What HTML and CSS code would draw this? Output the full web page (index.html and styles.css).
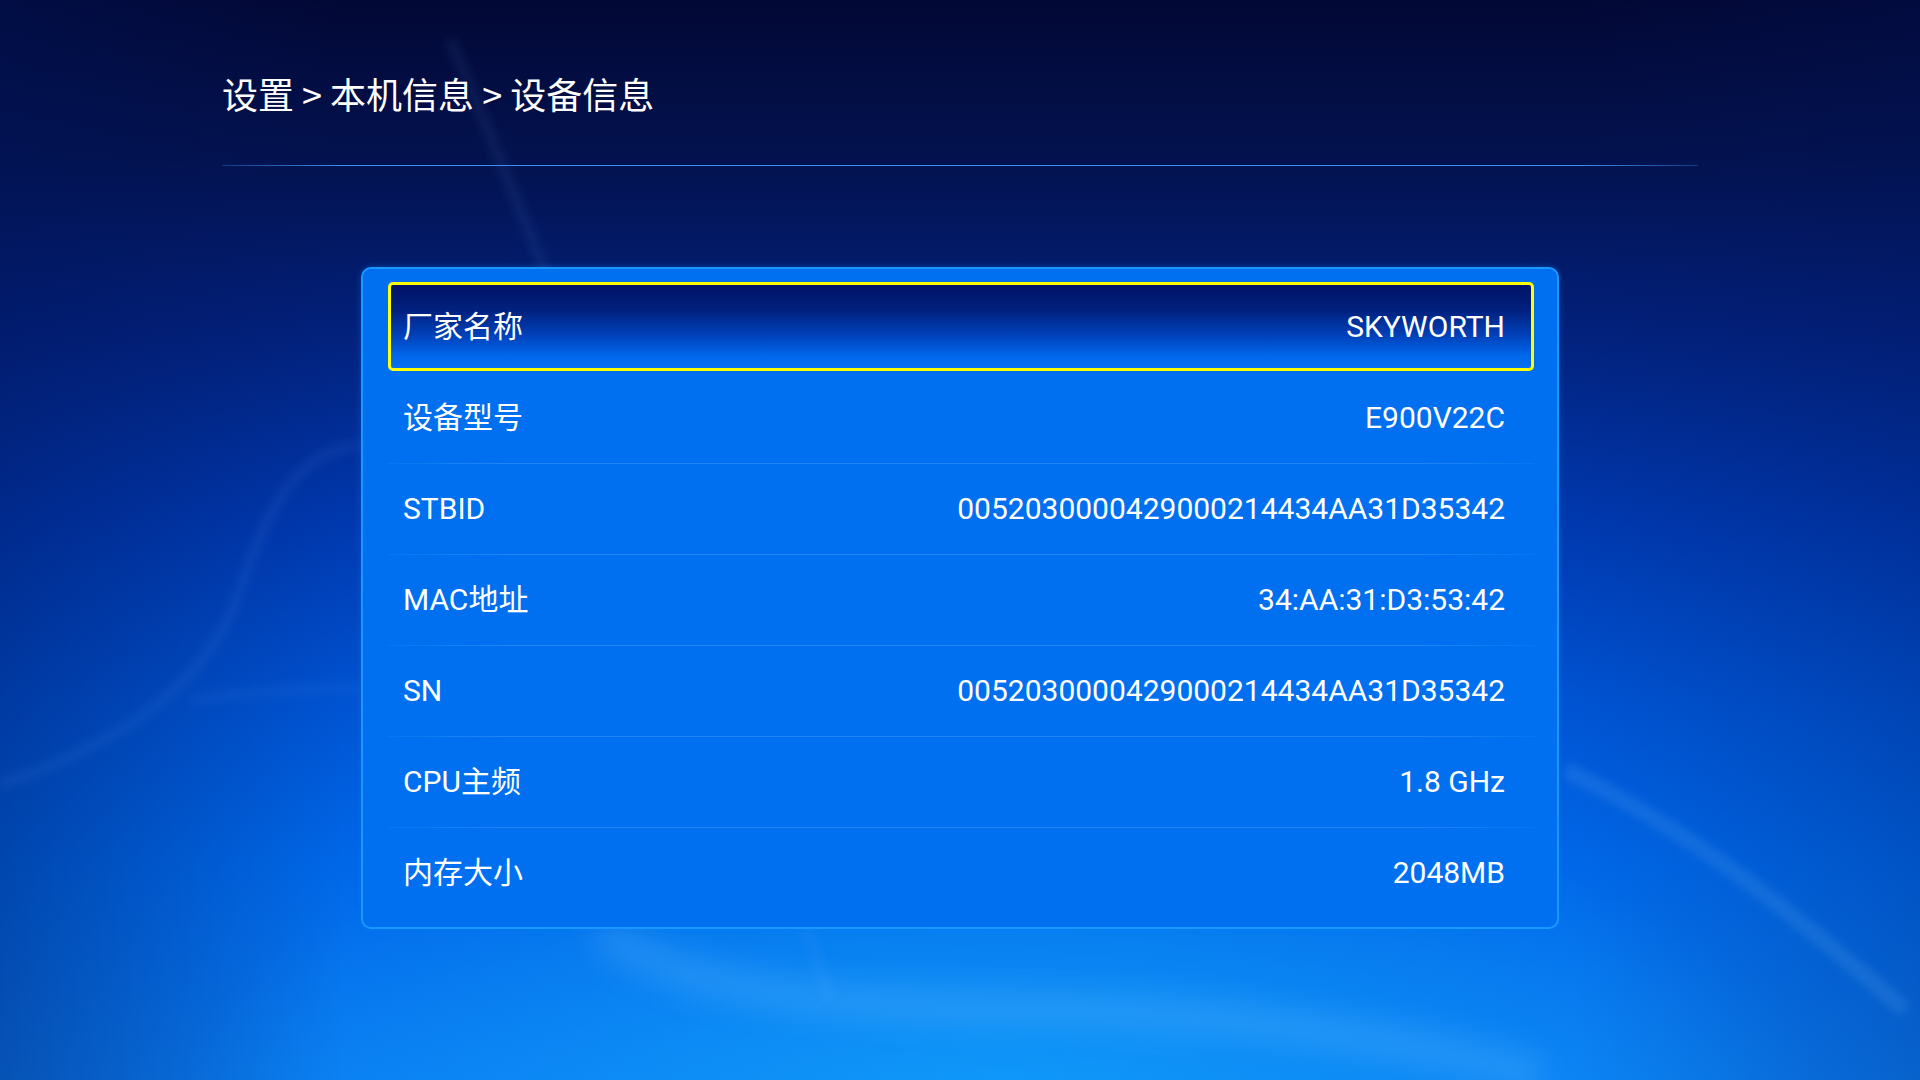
FILE: index.html
```html
<!DOCTYPE html>
<html lang="zh-CN">
<head>
<meta charset="utf-8">
<title>设备信息</title>
<link rel="stylesheet" href="styles.css">
</head>
<body>
<div class="screen">
  <svg class="bg-swirl" width="1920" height="1080" viewBox="0 0 1920 1080">
    <defs>
      <filter id="soft" x="-10%" y="-10%" width="120%" height="120%"><feGaussianBlur stdDeviation="4"/></filter>
      <filter id="softer" x="-20%" y="-20%" width="140%" height="140%"><feGaussianBlur stdDeviation="14"/></filter>
    </defs>
    <g fill="none" filter="url(#soft)">
      <path d="M450 40 C 520 200, 600 420, 690 620 S 790 880, 830 1000" stroke="rgba(110,170,255,0.08)" stroke-width="12"/>
      <path d="M690 400 C 830 360, 1030 470, 1120 700" stroke="rgba(110,170,255,0.09)" stroke-width="10"/>
      <path d="M830 520 C 770 560, 750 650, 760 760" stroke="rgba(110,170,255,0.07)" stroke-width="8"/>
      <path d="M362 445 C 300 450, 270 500, 240 590 S 130 740, 0 785" stroke="rgba(110,170,255,0.08)" stroke-width="12"/>
      <path d="M190 700 C 260 690, 320 688, 362 688" stroke="rgba(110,170,255,0.07)" stroke-width="10"/>
      <path d="M1565 770 C 1690 830, 1790 910, 1905 1010" stroke="rgba(150,210,255,0.12)" stroke-width="16"/>
    </g>
    <g fill="none" filter="url(#softer)">
      <path d="M600 930 C 680 990, 820 1005, 1000 1008 S 1350 1025, 1540 1075" stroke="rgba(120,200,255,0.20)" stroke-width="36"/>
    </g>
  </svg>

  <header class="header">
    <h1 class="crumb">设置 &gt; 本机信息 &gt; 设备信息</h1>
  </header>
  <div class="rule"></div>

  <section class="panel">
    <div class="row selected"><span class="label">厂家名称</span><span class="value">SKYWORTH</span></div>
    <div class="row"><span class="label">设备型号</span><span class="value">E900V22C</span></div>
    <div class="row"><span class="label">STBID</span><span class="value">0052030000429000214434AA31D35342</span></div>
    <div class="row"><span class="label">MAC地址</span><span class="value">34:AA:31:D3:53:42</span></div>
    <div class="row"><span class="label">SN</span><span class="value">0052030000429000214434AA31D35342</span></div>
    <div class="row"><span class="label">CPU主频</span><span class="value">1.8 GHz</span></div>
    <div class="row last"><span class="label">内存大小</span><span class="value">2048MB</span></div>
  </section>
</div>
</body>
</html>
```

FILE: styles.css
```css
html, body {
  margin: 0;
  padding: 0;
  width: 1920px;
  height: 1080px;
  overflow: hidden;
}

body {
  font-family: Roboto, "Noto Sans CJK SC", "Noto Sans", sans-serif;
  color: #ffffff;
  background: #02093a;
}

.screen {
  position: relative;
  width: 1920px;
  height: 1080px;
  overflow: hidden;
  display: flex;
  flex-direction: column;
  background:
    radial-gradient(ellipse 820px 300px at 1000px 1090px, rgba(20,175,255,0.55), rgba(20,175,255,0) 100%),
    linear-gradient(90deg, rgba(0,20,90,0.4) 0%, rgba(0,20,90,0) 18%, rgba(0,20,90,0) 82%, rgba(0,20,90,0.25) 100%),
    linear-gradient(180deg, #020835 0%, #03124f 15%, #02207a 30%, #0038ae 48%, #0053d2 65%, #0068e8 80%, #0a7cf2 100%);
}

.bg-swirl {
  position: absolute;
  left: 0;
  top: 0;
  z-index: 0;
  pointer-events: none;
}

.header, .rule, .panel {
  position: relative;
  z-index: 1;
}

.header {
  padding: 75px 0 0 222px;
}

.crumb {
  margin: 0;
  font-family: "Noto Sans CJK SC", "Noto Sans", sans-serif;
  font-weight: 400;
  font-size: 36px;
  line-height: 36px;
  white-space: pre;
}

.rule {
  margin: 54px 0 0 222px;
  width: 1476px;
  height: 1px;
  background: linear-gradient(90deg, rgba(60,150,240,0.3) 0%, #3a8ff0 8%, #3a8ff0 92%, rgba(60,150,240,0.3) 100%);
}

.panel {
  margin: 101px 0 0 361px;
  box-sizing: border-box;
  width: 1198px;
  height: 662px;
  border: 2px solid #1a98ff;
  border-radius: 10px;
  background: #006ff0;
  padding: 13px 23px 0 25px;
  display: flex;
  flex-direction: column;
  box-shadow: 0 0 6px rgba(0,130,255,0.4);
}

.row {
  flex: 0 0 auto;
  height: 91px;
  box-sizing: border-box;
  padding: 0 29px 1px 15px;
  display: flex;
  align-items: center;
  justify-content: space-between;
  font-size: 30px;
  line-height: 1;
  border-bottom: 1px solid transparent;
  border-image: linear-gradient(90deg, rgba(40,140,250,0.2), #1f86f3 10%, #1f86f3 90%, rgba(40,140,250,0.2)) 1;
}

.row.selected {
  height: 89px;
  margin-bottom: 2px;
  border: 3px solid #ffff00;
  border-image: none;
  border-radius: 5px;
  padding: 0 26px 0 12px;
  background: linear-gradient(180deg, #001466 0%, #01207e 30%, #0040b8 60%, #0066ea 85%, #0870f2 100%);
}

.row.last {
  border-bottom: none;
  border-image: none;
}

.label, .value {
  font-family: Roboto, "Noto Sans CJK SC", sans-serif;
}

.value {
  text-align: right;
}
```
